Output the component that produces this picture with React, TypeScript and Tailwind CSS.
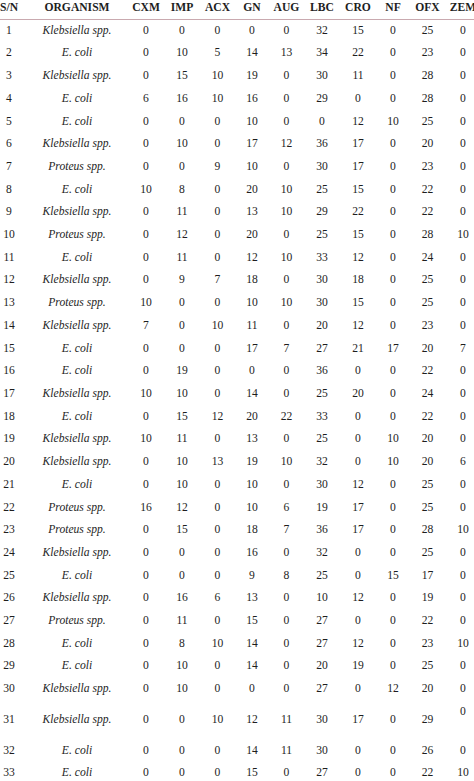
const rows: [number, string, string[]][] = [
  [1, 'Klebsiella spp.', ['0', '0', '0', '0', '0', '32', '15', '0', '25', '0']],
  [2, 'E. coli', ['0', '10', '5', '14', '13', '34', '22', '0', '23', '0']],
  [3, 'Klebsiella spp.', ['0', '15', '10', '19', '0', '30', '11', '0', '28', '0']],
  [4, 'E. coli', ['6', '16', '10', '16', '0', '29', '0', '0', '28', '0']],
  [5, 'E. coli', ['0', '0', '0', '10', '0', '0', '12', '10', '25', '0']],
  [6, 'Klebsiella spp.', ['0', '10', '0', '17', '12', '36', '17', '0', '20', '0']],
  [7, 'Proteus spp.', ['0', '0', '9', '10', '0', '30', '17', '0', '23', '0']],
  [8, 'E. coli', ['10', '8', '0', '20', '10', '25', '15', '0', '22', '0']],
  [9, 'Klebsiella spp.', ['0', '11', '0', '13', '10', '29', '22', '0', '22', '0']],
  [10, 'Proteus spp.', ['0', '12', '0', '20', '0', '25', '15', '0', '28', '10']],
  [11, 'E. coli', ['0', '11', '0', '12', '10', '33', '12', '0', '24', '0']],
  [12, 'Klebsiella spp.', ['0', '9', '7', '18', '0', '30', '18', '0', '25', '0']],
  [13, 'Proteus spp.', ['10', '0', '0', '10', '10', '30', '15', '0', '25', '0']],
  [14, 'Klebsiella spp.', ['7', '0', '10', '11', '0', '20', '12', '0', '23', '0']],
  [15, 'E. coli', ['0', '0', '0', '17', '7', '27', '21', '17', '20', '7']],
  [16, 'E. coli', ['0', '19', '0', '0', '0', '36', '0', '0', '22', '0']],
  [17, 'Klebsiella spp.', ['10', '10', '0', '14', '0', '25', '20', '0', '24', '0']],
  [18, 'E. coli', ['0', '15', '12', '20', '22', '33', '0', '0', '22', '0']],
  [19, 'Klebsiella spp.', ['10', '11', '0', '13', '0', '25', '0', '10', '20', '0']],
  [20, 'Klebsiella spp.', ['0', '10', '13', '19', '10', '32', '0', '10', '20', '6']],
  [21, 'E. coli', ['0', '10', '0', '10', '0', '30', '12', '0', '25', '0']],
  [22, 'Proteus spp.', ['16', '12', '0', '10', '6', '19', '17', '0', '25', '0']],
  [23, 'Proteus spp.', ['0', '15', '0', '18', '7', '36', '17', '0', '28', '10']],
  [24, 'Klebsiella spp.', ['0', '0', '0', '16', '0', '32', '0', '0', '25', '0']],
  [25, 'E. coli', ['0', '0', '0', '9', '8', '25', '0', '15', '17', '0']],
  [26, 'Klebsiella spp.', ['0', '16', '6', '13', '0', '10', '12', '0', '19', '0']],
  [27, 'Proteus spp.', ['0', '11', '0', '15', '0', '27', '0', '0', '22', '0']],
  [28, 'E. coli', ['0', '8', '10', '14', '0', '27', '12', '0', '23', '10']],
  [29, 'E. coli', ['0', '10', '0', '14', '0', '20', '19', '0', '25', '0']],
  [30, 'Klebsiella spp.', ['0', '10', '0', '0', '0', '27', '0', '12', '20', '0']],
  [31, 'Klebsiella spp.', ['0', '0', '10', '12', '11', '30', '17', '0', '29', '0']],
  [32, 'E. coli', ['0', '0', '0', '14', '11', '30', '0', '0', '26', '0']],
  [33, 'E. coli', ['0', '0', '0', '15', '0', '27', '0', '0', '22', '10']],
];

const drugs = ['CXM', 'IMP', 'ACX', 'GN', 'AUG', 'LBC', 'CRO', 'NF', 'OFX', 'ZEM'];

const cols = 'grid grid-cols-[34px_102px_36px_36px_35px_34px_35px_36px_36px_34px_35px_36px]';

export default function App() {
  return (
    <div className="w-[474px] h-[781px] overflow-hidden bg-white text-[#1e1e1e] text-[11.6px] font-[family-name:Liberation_Serif,Times_New_Roman,serif]">
      <div className="-ml-[8px] w-[482px]">
        <div className={`${cols} border-b border-[#c9a9af] font-bold`}>
          <div className="flex justify-center pb-[3px] leading-[15.5px]">S/N</div>
          <div className="flex justify-center pb-[3px] leading-[15.5px]">ORGANISM</div>
          {drugs.map((d) => (
            <div key={d} className="flex justify-center pb-[3px] leading-[15.5px] whitespace-nowrap">{d}</div>
          ))}
        </div>
        {rows.map(([sn, org, vals]) => (
          <div key={sn} className={cols}>
            <div className="flex items-center justify-center py-[3.25px] leading-[16.2px]">{sn}</div>
            <div className="flex items-center justify-center py-[3.25px] leading-[16.2px] italic whitespace-nowrap">{org}</div>
            {vals.map((v, i) => (
              <div key={i} className="flex items-center justify-center py-[3.25px] leading-[16.2px] text-center">
                {sn === 31 && i === 9 ? (
                  <span>
                    {v}
                    <br />
                    {'\u00a0'}
                  </span>
                ) : (
                  v
                )}
              </div>
            ))}
          </div>
        ))}
      </div>
    </div>
  );
}
